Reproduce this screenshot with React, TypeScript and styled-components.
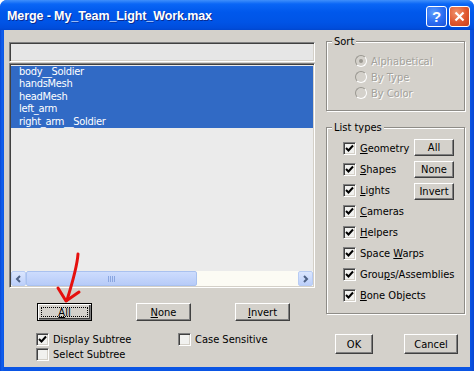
import React from "react";
import styled, { createGlobalStyle, css } from "styled-components";

const GlobalStyle = createGlobalStyle`
  html, body { margin: 0; padding: 0; background: #ffffff; }
  body {
    font-family: "DejaVu Sans Condensed", "Liberation Sans", Tahoma, sans-serif;
    font-size: 11px;
    color: #000;
  }
  * { box-sizing: border-box; }
`;

const FACE = "#d4d1cb";

const Window = styled.div`
  position: relative;
  width: 474px;
  height: 371px;
  display: flex;
  flex-direction: column;
  border-radius: 7px 7px 0 0;
  overflow: hidden;
  background: linear-gradient(90deg, #0846d4 0px, #1060ee 2px, #0a55e4 4px, #0a55e4 470px, #0846d4 474px);
`;

const TitleBar = styled.div`
  height: 30px;
  flex: none;
  display: flex;
  align-items: center;
  padding: 0 4px 0 7px;
  background: linear-gradient(
    180deg,
    #3f8ffb 0px,
    #0a66f6 4px,
    #0058ec 12px,
    #0054e6 22px,
    #004ddc 28px,
    #0046cf 30px
  );
`;

const Title = styled.div`
  flex: 1;
  color: #fff;
  font-family: "Liberation Sans", Arial, sans-serif;
  font-weight: bold;
  font-size: 12.5px;
  letter-spacing: -0.1px;
  text-shadow: 1px 1px 0 #0a2a90;
  padding-top: 2px;
`;

const CaptionButtons = styled.div`
  display: flex;
  gap: 2px;
  margin-top: 3px;
`;

const CaptionButton = styled.div<{ $variant: "help" | "close" }>`
  width: 21px;
  height: 21px;
  border: 1px solid #fff;
  border-radius: 3px;
  display: flex;
  align-items: center;
  justify-content: center;
  color: #fff;
  font-family: "Liberation Sans", Arial, sans-serif;
  font-weight: bold;
  font-size: 15px;
  ${(p) =>
    p.$variant === "help"
      ? css`
          background: radial-gradient(circle at 35% 30%, #5d9dfb 0%, #2a6cf2 55%, #1c51d6 100%);
        `
      : css`
          background: radial-gradient(circle at 35% 30%, #f0946e 0%, #e0572e 55%, #c8401c 100%);
        `}
`;

const Client = styled.div`
  flex: 1;
  margin: 0 4px 4px 4px;
  background: ${FACE};
  display: flex;
  align-items: flex-start;
  padding-left: 5px;
`;

const LeftCol = styled.div`
  width: 306px;
  margin-top: 12px;
  display: flex;
  flex-direction: column;
`;

const sunken = css`
  border: 1px solid;
  border-color: #808080 #ffffff #ffffff #808080;
  box-shadow: inset 1px 1px 0 #404040, inset -1px -1px 0 #d4d0c8;
`;

const FilterEdit = styled.div`
  height: 20px;
  ${sunken};
  background: #e6e6e6;
`;

const ListBox = styled.div`
  margin-top: 1px;
  height: 225px;
  ${sunken};
  background: #ebebeb;
  display: flex;
  flex-direction: column;
  padding: 1px;
`;

const Items = styled.div`
  flex: 1;
  padding-top: 1px;
`;

const Item = styled.div<{ $selected?: boolean }>`
  height: 12.4px;
  line-height: 12.4px;
  padding-left: 8px;
  white-space: nowrap;
  letter-spacing: -0.3px;
  ${(p) =>
    p.$selected &&
    css`
      background: #316ac5;
      color: #fff;
    `}
`;

const HScroll = styled.div`
  height: 15px;
  display: flex;
  background: #fcfbf4;
`;

const ScrollArrow = styled.div`
  width: 15px;
  height: 15px;
  flex: none;
  border: 1px solid #b8ccf3;
  border-radius: 2px;
  background: linear-gradient(180deg, #dbe6fe 0%, #bccffa 100%);
  display: flex;
  align-items: center;
  justify-content: center;
`;

const Thumb = styled.div`
  width: 171px;
  height: 15px;
  border: 1px solid #a9c1ef;
  border-radius: 2px;
  background: linear-gradient(180deg, #cddcfd 0%, #b7cbf8 100%);
  display: flex;
  align-items: center;
  justify-content: center;
  gap: 1px;
`;

const Grip = styled.span`
  width: 1px;
  height: 6px;
  background: #8aa6e0;
`;

const Track = styled.div`
  flex: 1;
`;

const ButtonRow = styled.div`
  margin-top: 15px;
  padding-left: 28px;
  display: flex;
  gap: 44px;
`;

const PushButton = styled.div<{ $w: number; $h?: number; $focused?: boolean }>`
  width: ${(p) => p.$w}px;
  height: ${(p) => p.$h ?? 18}px;
  flex: none;
  display: flex;
  align-items: center;
  justify-content: center;
  background: ${FACE};
  border: 1px solid;
  border-color: #ffffff #404040 #404040 #ffffff;
  box-shadow: inset -1px -1px 0 #808080;
  line-height: 1;
  ${(p) =>
    p.$focused &&
    css`
      border-color: #000;
      box-shadow: inset 1px 1px 0 #fff, inset -1px -1px 0 #808080, inset -2px -2px 0 #404040;
      position: relative;
      &::after {
        content: "";
        position: absolute;
        inset: 3px;
        border: 1px dotted #000;
      }
    `}
`;

const Options = styled.div`
  margin-top: 12px;
  padding-left: 27px;
  display: grid;
  grid-template-columns: 142px auto;
  row-gap: 2px;
`;

const CheckRow = styled.label`
  display: flex;
  align-items: center;
  gap: 4px;
  height: 13px;
  white-space: nowrap;
`;

const CheckBox = styled.span`
  width: 13px;
  height: 13px;
  flex: none;
  ${sunken};
  background: #f1f1ef;
  display: flex;
  align-items: center;
  justify-content: center;
`;

const RightCol = styled.div`
  width: 140px;
  margin-left: 11px;
  margin-top: 5px;
  display: flex;
  flex-direction: column;
`;

const GroupBox = styled.fieldset<{ $mt?: number }>`
  margin: ${(p) => p.$mt ?? 0}px 0 0 0;
  padding: 0;
  min-width: 0;
  border: 1px solid #8e8c87;
  box-shadow: inset 1px 1px 0 #fff, 1px 1px 0 #fff;
  width: 139px;
`;

const Legend = styled.legend`
  margin-left: 5px;
  padding: 0 2px;
  line-height: 13px;
  background: ${FACE};
`;

const RadioList = styled.div`
  padding: 5px 0 9px 28px;
  display: flex;
  flex-direction: column;
`;

const RadioRow = styled.div`
  height: 16px;
  display: flex;
  align-items: center;
  gap: 4px;
  color: #a3a19b;
  text-shadow: 1px 1px 0 #ffffff;
`;

const Radio = styled.span<{ $on?: boolean }>`
  width: 12px;
  height: 12px;
  border-radius: 50%;
  border: 1px solid;
  border-color: #9a9891 #ffffff #ffffff #9a9891;
  background: ${FACE};
  display: flex;
  align-items: center;
  justify-content: center;
  &::after {
    content: "";
    width: 4px;
    height: 4px;
    border-radius: 50%;
    background: ${(p) => (p.$on ? "#9a9891" : "transparent")};
  }
`;

const TypesBody = styled.div`
  display: flex;
  padding: 4px 10px 7px 16px;
`;

const TypeList = styled.div`
  width: 71px;
  flex: none;
  display: flex;
  flex-direction: column;
`;

const TypeRow = styled.label`
  height: 21px;
  display: flex;
  align-items: center;
  gap: 4px;
  white-space: nowrap;
`;

const SideButtons = styled.div`
  width: 40px;
  flex: none;
  display: flex;
  flex-direction: column;
  gap: 5px;
  padding-top: 1px;
`;

const DialogButtons = styled.div`
  margin-top: 20px;
  padding-right: 8px;
  display: flex;
  justify-content: flex-end;
  gap: 31px;
`;

const ArrowOverlay = styled.svg`
  position: absolute;
  left: 0;
  top: 0;
  pointer-events: none;
`;

const Check = () => (
  <svg width="9" height="9" viewBox="0 0 9 9">
    <polyline points="1,4 3.5,6.5 8,1.5" fill="none" stroke="#000" strokeWidth="2" />
  </svg>
);

const ArrowIcon = ({ dir }: { dir: "left" | "right" }) => (
  <svg width="7" height="8" viewBox="0 0 7 8">
    <polyline
      points={dir === "left" ? "5,1 2,4 5,7" : "2,1 5,4 2,7"}
      fill="none"
      stroke="#4d6185"
      strokeWidth="2"
    />
  </svg>
);

const items = ["body__Soldier", "handsMesh", "headMesh", "left_arm", "right_arm__Soldier"];

const types: React.ReactNode[] = [
  <><u>G</u>eometry</>,
  <><u>S</u>hapes</>,
  <><u>L</u>ights</>,
  <><u>C</u>ameras</>,
  <><u>H</u>elpers</>,
  <>Space <u>W</u>arps</>,
  <>Grou<u>p</u>s/Assemblies</>,
  <><u>B</u>one Objects</>,
];

export default function App() {
  return (
    <>
      <GlobalStyle />
      <Window>
        <TitleBar>
          <Title>Merge - My_Team_Light_Work.max</Title>
          <CaptionButtons>
            <CaptionButton $variant="help">?</CaptionButton>
            <CaptionButton $variant="close">
              <svg width="11" height="11" viewBox="0 0 11 11">
                <path d="M1.5 1.5 L9.5 9.5 M9.5 1.5 L1.5 9.5" stroke="#fff" strokeWidth="2.2" />
              </svg>
            </CaptionButton>
          </CaptionButtons>
        </TitleBar>
        <Client>
          <LeftCol>
            <FilterEdit />
            <ListBox>
              <Items>
                {items.map((it) => (
                  <Item key={it} $selected>
                    {it}
                  </Item>
                ))}
              </Items>
              <HScroll>
                <ScrollArrow>
                  <ArrowIcon dir="left" />
                </ScrollArrow>
                <Thumb>
                  <Grip />
                  <Grip />
                  <Grip />
                  <Grip />
                </Thumb>
                <Track />
                <ScrollArrow>
                  <ArrowIcon dir="right" />
                </ScrollArrow>
              </HScroll>
            </ListBox>
            <ButtonRow>
              <PushButton $w={55} $focused>
                <span>
                  <u>A</u>ll
                </span>
              </PushButton>
              <PushButton $w={55}>
                <span>
                  <u>N</u>one
                </span>
              </PushButton>
              <PushButton $w={55}>
                <span>
                  <u>I</u>nvert
                </span>
              </PushButton>
            </ButtonRow>
            <Options>
              <CheckRow>
                <CheckBox>
                  <Check />
                </CheckBox>
                Display Subtree
              </CheckRow>
              <CheckRow>
                <CheckBox />
                Case Sensitive
              </CheckRow>
              <CheckRow>
                <CheckBox />
                Select Subtree
              </CheckRow>
            </Options>
          </LeftCol>
          <RightCol>
            <GroupBox>
              <Legend>Sort</Legend>
              <RadioList>
                <RadioRow>
                  <Radio $on />
                  Alphabetical
                </RadioRow>
                <RadioRow>
                  <Radio />
                  By Type
                </RadioRow>
                <RadioRow>
                  <Radio />
                  By Color
                </RadioRow>
              </RadioList>
            </GroupBox>
            <GroupBox $mt={10}>
              <Legend>List types</Legend>
              <TypesBody>
                <TypeList>
                  {types.map((t, i) => (
                    <TypeRow key={i}>
                      <CheckBox>
                        <Check />
                      </CheckBox>
                      <span>{t}</span>
                    </TypeRow>
                  ))}
                </TypeList>
                <SideButtons>
                  <PushButton $w={40} $h={17}>All</PushButton>
                  <PushButton $w={40} $h={17}>None</PushButton>
                  <PushButton $w={40} $h={17}>Invert</PushButton>
                </SideButtons>
              </TypesBody>
            </GroupBox>
            <DialogButtons>
              <PushButton $w={38} $h={20}>OK</PushButton>
              <PushButton $w={54} $h={20}>Cancel</PushButton>
            </DialogButtons>
          </RightCol>
        </Client>
        <ArrowOverlay width="474" height="371" viewBox="0 0 474 371">
          <path
            d="M78 254 C77 268 72 284 67 300"
            fill="none"
            stroke="#e5100e"
            strokeWidth="3"
            strokeLinecap="round"
          />
          <path
            d="M58 288 L66 301 L79 292"
            fill="none"
            stroke="#e5100e"
            strokeWidth="3"
            strokeLinecap="round"
            strokeLinejoin="round"
          />
        </ArrowOverlay>
      </Window>
    </>
  );
}
